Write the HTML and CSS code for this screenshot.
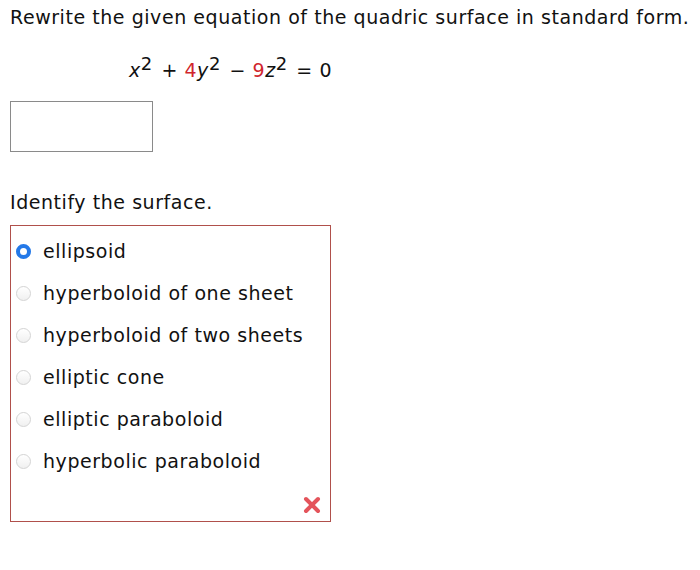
FILE: index.html
```html
<!DOCTYPE html>
<html lang="en">
<head>
    <meta charset="UTF-8">
    <title>Quadric surface</title>
    <link rel="stylesheet" href="styles.css">
</head>
<body>
    <p class="prompt">Rewrite the given equation of the quadric surface in standard form.</p>

    <div class="equation">
        <i>x</i><sup>2</sup> + <span class="coef">4</span><i>y</i><sup>2</sup> &minus; <span class="coef">9</span><i>z</i><sup>2</sup> = 0
    </div>

    <div class="answer-box"></div>

    <p class="prompt second">Identify the surface.</p>

    <div class="choices wrong">
        <label class="choice"><span class="radio checked"></span>ellipsoid</label>
        <label class="choice"><span class="radio"></span>hyperboloid of one sheet</label>
        <label class="choice"><span class="radio"></span>hyperboloid of two sheets</label>
        <label class="choice"><span class="radio"></span>elliptic cone</label>
        <label class="choice"><span class="radio"></span>elliptic paraboloid</label>
        <label class="choice"><span class="radio"></span>hyperbolic paraboloid</label>
        <div class="mark">
            <svg width="18" height="18" viewBox="0 0 18 18">
                <path d="M3 3 L15 15 M15 3 L3 15" stroke="#e4545b" stroke-width="4" stroke-linecap="round"/>
            </svg>
        </div>
    </div>
</body>
</html>
```

FILE: styles.css
```css
body {
    font-family: "DejaVu Sans", Verdana, sans-serif;
    font-size: 19px;
    letter-spacing: 0.55px;
    color: #111;
    background: #fff;
    margin: 0;
    padding: 0 0 0 10px;
}
.prompt {
    margin: 0;
    padding-top: 6px;
    line-height: 22px;
    white-space: nowrap;
}
.prompt.second {
    margin-top: 33px;
}
.equation {
    margin: 30px 0 0 119px;
    line-height: 24px;
}
.equation sup {
    font-size: 18px;
    vertical-align: 7px;
    line-height: 0;
    margin-right: 2px;
}
.coef {
    color: #d0262d;
}
.answer-box {
    width: 141px;
    height: 49px;
    border: 1px solid #8a8a8a;
    margin-top: 19px;
}
.choices {
    width: 319px;
    margin-top: 12px;
    padding-top: 4px;
    box-sizing: content-box;
}
.choices.wrong {
    border: 1px solid #b0504b;
}
.choice {
    display: flex;
    align-items: center;
    height: 42px;
    line-height: 24px;
}
.radio {
    width: 15px;
    height: 15px;
    border-radius: 50%;
    border: 1px solid #d4d4d4;
    background: linear-gradient(#fff, #f0f0f0);
    margin: 0 12px 0 5px;
    box-sizing: border-box;
}
.radio.checked {
    border: 4px solid #2479e8;
    background: #fff;
}
.mark {
    display: flex;
    justify-content: flex-end;
    padding: 14px 9px 7px 0;
}
```
